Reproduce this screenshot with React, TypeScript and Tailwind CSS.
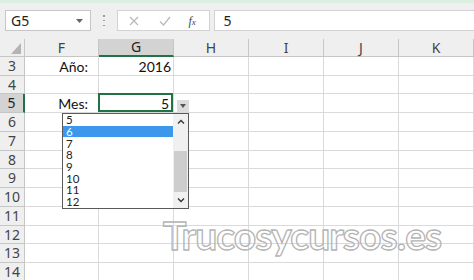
import React from "react";

const cols = ["F", "G", "H", "I", "J", "K"];
const colW = [74, 75, 75, 75, 75, 75];
const rows = [3, 4, 5, 6, 7, 8, 9, 10, 11, 12, 13, 14];
const rowH = [19, 18, 19, 19, 19, 18, 19, 19, 19, 18, 19, 19];

function Cell({ r, c, w }: { r: number; c: number; w: number }) {
  let content: React.ReactNode = null;
  let cls = "";
  if (r === 3 && c === 0) {
    content = "Año:";
    cls = "justify-end pr-[10px]";
  } else if (r === 3 && c === 1) {
    content = "2016";
    cls = "justify-end pr-[2px]";
  } else if (r === 5 && c === 0) {
    content = "Mes:";
    cls = "justify-end pr-[10px]";
  } else if (r === 5 && c === 1) {
    content = "5";
    cls = "justify-end pr-[4px]";
  }
  return (
    <div
      style={{ width: w }}
      className={`relative flex h-full shrink-0 items-end border-b border-r border-[#dadada] text-[14px] leading-[17px] text-[#111] ${cls}`}
    >
      {content}
      {r === 5 && c === 1 && (
        <div className="absolute left-[-1px] top-[-1px] h-[calc(100%+1px)] w-[calc(100%+1px)] border-2 border-[#217346]" />
      )}
    </div>
  );
}

export default function App() {
  return (
    <div
      className="relative flex h-[280px] w-[474px] flex-col overflow-hidden bg-white"
      style={{ fontFamily: "Lato, 'Liberation Sans', sans-serif" }}
    >
      {/* toolbar */}
      <div className="flex h-[39px] shrink-0 items-start border-t-[3px] border-[#dcefe0] bg-[#efefef] pt-[7px]">
        <div className="ml-[5px] flex h-[21px] w-[86px] items-center justify-between border border-[#c6c6c6] bg-white pl-[5px] pr-[7px] text-[14px] text-[#222]" style={{ fontFamily: "'Noto Sans', sans-serif" }}>
          <span className="leading-none">G5</span>
          <svg width="7" height="4" viewBox="0 0 7 4"><path d="M0 0h7L3.5 4z" fill="#666" /></svg>
        </div>
        <div className="ml-[12px] mt-[5px] flex h-[11px] flex-col justify-between">
          <span className="block h-[1.5px] w-[1.5px] bg-[#9a9a9a]" />
          <span className="block h-[1.5px] w-[1.5px] bg-[#9a9a9a]" />
          <span className="block h-[1.5px] w-[1.5px] bg-[#9a9a9a]" />
        </div>
        <div className="ml-[12px] flex h-[21px] w-[93px] items-center border border-[#d2d2d2] bg-white">
          <svg className="ml-[11px]" width="10" height="10" viewBox="0 0 10 10">
            <path d="M1 1L9 9M9 1L1 9" stroke="#b8b8b8" strokeWidth="1.2" />
          </svg>
          <svg className="ml-[20px]" width="12" height="10" viewBox="0 0 12 10">
            <path d="M1 5.5L4.5 9L11 1" stroke="#b8b8b8" strokeWidth="1.2" fill="none" />
          </svg>
          <span className="ml-[18px] text-[12px] italic text-[#444]" style={{ fontFamily: "'Liberation Serif', serif" }}>
            f<span className="text-[9px]">x</span>
          </span>
        </div>
        <div className="ml-[4px] flex h-[21px] flex-1 items-center border border-r-0 border-[#d2d2d2] bg-white pl-[9px] text-[14px] text-[#222]" style={{ fontFamily: "'Noto Sans', sans-serif" }}>
          5
        </div>
      </div>

      {/* column headers */}
      <div className="flex h-[18px] shrink-0 text-[14px] text-[#444]" style={{ fontFamily: "'Noto Sans', sans-serif" }}>
        <div className="relative h-full w-[25px] shrink-0 border-b border-r border-[#c6c6c6] bg-[#efefef]">
          <svg className="absolute bottom-[2px] right-[3px]" width="10" height="11" viewBox="0 0 10 11">
            <path d="M10 0V11H0z" fill="#b4b4b4" />
          </svg>
        </div>
        {cols.map((c, i) => (
          <div
            key={c}
            style={{ width: colW[i] }}
            className={`flex h-full shrink-0 items-center justify-center border-r border-[#c6c6c6] leading-none ${
              i === 1 ? "border-b-2 border-b-[#217346] bg-[#d3d3d3] text-[#222]" : "border-b bg-[#efefef]"
            }`}
          >
            {c}
          </div>
        ))}
      </div>

      {/* rows */}
      {rows.map((r, ri) => (
        <div key={r} style={{ height: rowH[ri] }} className="flex shrink-0">
          <div
            className={`flex h-full w-[25px] shrink-0 items-center justify-center border-b text-[14px] leading-none ${
              r === 5
                ? "border-r-2 border-b-[#c6c6c6] border-r-[#217346] bg-[#d3d3d3] text-[#222]"
                : "border-r border-[#c6c6c6] bg-[#efefef] text-[#444]"
            }`}
            style={{ fontFamily: "'Noto Sans', sans-serif" }}
          >
            {r}
          </div>
          {cols.map((c, ci) => (
            <Cell key={c} r={r} c={ci} w={colW[ci]} />
          ))}
        </div>
      ))}

      {/* dropdown arrow button */}
      <div className="absolute left-[177px] top-[100px] flex h-[12px] w-[12px] items-center justify-center bg-[#dcdcdc]">
        <svg width="6" height="4" viewBox="0 0 6 4"><path d="M0 0h6L3 4z" fill="#555" /></svg>
      </div>

      {/* dropdown list */}
      <div className="absolute left-[62px] top-[113px] flex h-[96px] w-[127px] border border-[#5a5a5a] bg-white text-[11.5px] text-[#222]">
        <div className="flex flex-1 flex-col">
          {[5, 6, 7, 8, 9, 10, 11, 12].map((n) => (
            <div
              key={n}
              className={`flex h-[11.7px] items-center pl-[3px] leading-[11px] ${n === 6 ? "bg-[#3c97ed] text-white" : ""}`}
            >
              {n}
            </div>
          ))}
        </div>
        <div className="flex w-[15px] flex-col items-center bg-[#f0f0f0]">
          <svg className="mt-[5px]" width="8" height="5" viewBox="0 0 8 5">
            <path d="M1 4.5L4 1.5L7 4.5" stroke="#333" strokeWidth="1.3" fill="none" />
          </svg>
          <div className="mt-[27px] h-[41px] w-[13px] bg-[#cdcdcd]" />
          <svg className="mt-[6px]" width="8" height="5" viewBox="0 0 8 5">
            <path d="M1 0.5L4 3.5L7 0.5" stroke="#333" strokeWidth="1.3" fill="none" />
          </svg>
        </div>
      </div>

      {/* watermark */}
      <div
        className="pointer-events-none absolute left-[163px] top-[216px] text-[39px] font-bold leading-none tracking-[-0.9px] text-transparent [-webkit-text-stroke:1.3px_#b4b4b4]"
        style={{ fontFamily: "Lato, sans-serif" }}
      >
        Trucosycursos.es
      </div>
    </div>
  );
}
